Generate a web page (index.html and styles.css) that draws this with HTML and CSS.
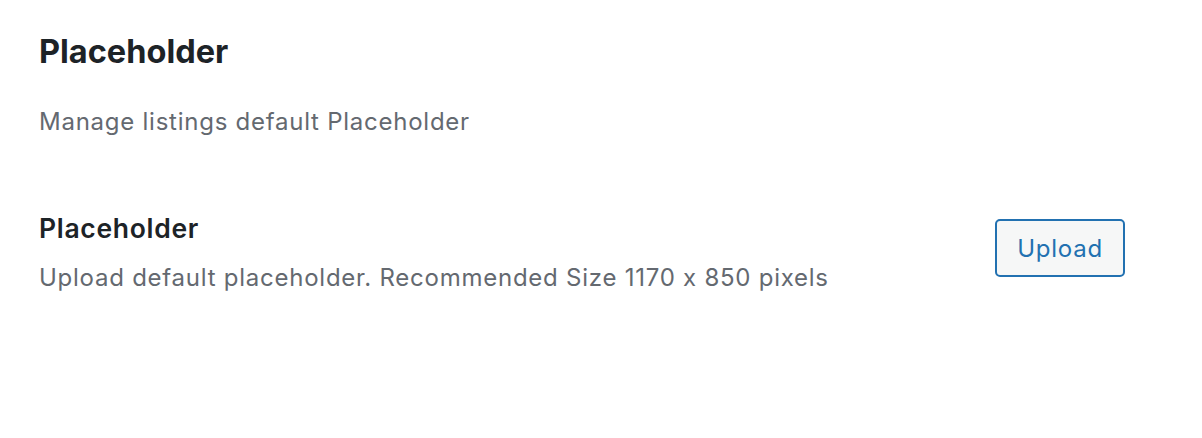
FILE: index.html
```html
<!DOCTYPE html>
<html lang="en">
<head>
  <meta charset="UTF-8" />
  <meta name="viewport" content="width=device-width, initial-scale=1.0" />
  <title>Placeholder</title>
  <link rel="stylesheet" href="styles.css">
</head>
<body>
  <div class="panel">
    <h2 class="panel-title">Placeholder</h2>
    <p class="panel-desc">Manage listings default Placeholder</p>

    <div class="field">
      <div class="field-info">
        <h3 class="field-title">Placeholder</h3>
        <p class="field-desc">Upload default placeholder. Recommended Size 1170 x 850 pixels</p>
      </div>
      <button class="btn-upload" type="button">Upload</button>
    </div>
  </div>
</body>
</html>
```

FILE: styles.css
```css
body {
  margin: 0;
  background: #fff;
  font-family: Inter, "Noto Sans", sans-serif;
  font-feature-settings: "calt" 0;
  color: #1d2327;
}
.panel { padding: 32px 77px 0 39px; }
.panel-title { margin: 0; font-size: 32.5px; font-weight: 700; line-height: 40px; color: #1d2327; }
.panel-desc { margin: 34px 0 0; font-size: 24px; letter-spacing: 0.75px; line-height: 32px; color: #646970; }
.field { display: flex; align-items: flex-start; justify-content: space-between; margin-top: 74px; }
.field-title { margin: 0; font-size: 26.5px; font-weight: 600; letter-spacing: 0.7px; line-height: 32px; color: #1d2327; }
.field-desc { margin: 18px 0 0; font-size: 24px; letter-spacing: 0.75px; line-height: 32px; color: #646970; }
.btn-upload {
  width: 130px; height: 58px; margin-top: 7px; padding: 0;
  background: #f6f7f7; border: 2px solid #2271b1; border-radius: 5px;
  color: #2271b1; font-family: inherit; font-size: 24px; letter-spacing: 0.75px; cursor: pointer;
}
```
